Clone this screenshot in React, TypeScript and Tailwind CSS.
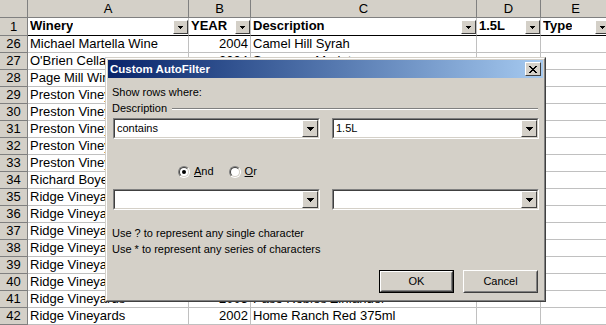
import React from 'react';

type Row = { n: number; a: string; b?: string; c?: string };

// sheet rows under the dialog (B/C of rows 28-40 sit fully behind it)
const rows: Row[] = [
  { n: 26, a: 'Michael Martella Wine', b: '2004', c: 'Camel Hill Syrah' },
  { n: 27, a: "O'Brien Cellars", b: '2004', c: 'Sycamore Merlot' },
  { n: 28, a: 'Page Mill Winery' },
  { n: 29, a: 'Preston Vineyards' },
  { n: 30, a: 'Preston Vineyards' },
  { n: 31, a: 'Preston Vineyards' },
  { n: 32, a: 'Preston Vineyards' },
  { n: 33, a: 'Preston Vineyards' },
  { n: 34, a: 'Richard Boyer Wines' },
  { n: 35, a: 'Ridge Vineyards' },
  { n: 36, a: 'Ridge Vineyards' },
  { n: 37, a: 'Ridge Vineyards' },
  { n: 38, a: 'Ridge Vineyards' },
  { n: 39, a: 'Ridge Vineyards' },
  { n: 40, a: 'Ridge Vineyards' },
  { n: 41, a: 'Ridge Vineyards', b: '2003', c: 'Paso Robles Zinfandel' },
  { n: 42, a: 'Ridge Vineyards', b: '2002', c: 'Home Ranch Red 375ml' },
];

const closeGlyph = ['11000011', '01100110', '00111100', '00011000', '00111100', '01100110', '11000011'];

const SmallArrow = () => (
  <svg width="5" height="3" viewBox="0 0 5 3" shapeRendering="crispEdges">
    <path d="M0 0h5v1h-1v1h-1v1h-1v-1h-1v-1h-1z" fill="#000" />
  </svg>
);

const ComboArrow = () => (
  <svg width="7" height="4" viewBox="0 0 7 4" shapeRendering="crispEdges">
    <path d="M0 0h7v1h-1v1h-1v1h-1v1h-1v-1h-1v-1h-1v-1h-1z" fill="#000" />
  </svg>
);

const FilterButton = () => (
  <div className="w-[15px] h-[14px] shrink-0 bg-[#d4d0c8] border border-t-white border-l-white border-r-[#404040] border-b-[#404040] flex items-center justify-center">
    <SmallArrow />
  </div>
);

const HeadCell = ({ className, label }: { className: string; label: string }) => (
  <div className={`${className} shrink-0 h-full border-r border-b border-r-[#c0c0c0] border-b-black flex items-end justify-between pl-[2px] pb-px`}>
    <span className="font-bold leading-[16px] whitespace-nowrap overflow-hidden">{label}</span>
    <FilterButton />
  </div>
);

const Combo = ({ value }: { value?: string }) => (
  <div className="w-[207px] h-[21px] border border-t-[#808080] border-l-[#808080] border-r-white border-b-white">
    <div className="h-full border border-t-[#404040] border-l-[#404040] border-r-[#d4d0c8] border-b-[#d4d0c8] bg-white flex items-center">
      <span className="flex-1 pl-[2px] text-[11px] leading-[13px]">{value}</span>
      <div className="w-[16px] h-full bg-[#d4d0c8] border border-t-white border-l-white border-r-[#404040] border-b-[#404040] flex items-center justify-center">
        <ComboArrow />
      </div>
    </div>
  </div>
);

const Radio = ({ checked }: { checked?: boolean }) => (
  <div className="w-[12px] h-[12px] rounded-full border border-t-[#808080] border-l-[#808080] border-r-white border-b-white">
    <div className="w-full h-full rounded-full bg-white border border-t-[#404040] border-l-[#404040] border-r-[#d4d0c8] border-b-[#d4d0c8] flex items-center justify-center">
      {checked && <div className="w-[4px] h-[4px] rounded-full bg-black" />}
    </div>
  </div>
);

const Button = ({ label, isDefault }: { label: string; isDefault?: boolean }) => (
  <div className={`w-[75px] h-[23px] ${isDefault ? 'border border-black' : ''}`}>
    <div className="h-full border border-t-white border-l-white border-r-[#404040] border-b-[#404040]">
      <div className="h-full border border-t-[#d4d0c8] border-l-[#d4d0c8] border-r-[#808080] border-b-[#808080] flex items-center justify-center text-[11px] leading-[13px]">
        {label}
      </div>
    </div>
  </div>
);

export default function App() {
  return (
    <div className="relative w-[606px] h-[325px] overflow-hidden bg-white text-black font-['Liberation_Sans',Arial,sans-serif] text-[13px]">
      {/* column headers */}
      <div className="flex h-[18px]">
        <div className="w-[28px] shrink-0 bg-[#d4d0c8] border-r border-b border-[#808080]" />
        {[
          ['w-[161px]', 'A'],
          ['w-[62px]', 'B'],
          ['w-[226px]', 'C'],
          ['w-[64px]', 'D'],
          ['w-[70px]', 'E'],
        ].map(([w, l]) => (
          <div key={l} className={`${w} shrink-0 bg-[#d4d0c8] border-r border-b border-[#808080] flex items-center justify-center leading-[16px]`}>
            {l}
          </div>
        ))}
      </div>

      {/* header row of the list */}
      <div className="flex h-[18px]">
        <div className="w-[28px] shrink-0 bg-[#d4d0c8] border-r border-b border-[#808080] flex items-center justify-center leading-[16px]">1</div>
        <HeadCell className="w-[161px]" label="Winery" />
        <HeadCell className="w-[62px]" label="YEAR" />
        <HeadCell className="w-[226px]" label="Description" />
        <HeadCell className="w-[64px]" label="1.5L" />
        <HeadCell className="w-[70px]" label="Type" />
      </div>

      {rows.map((r) => (
        <div key={r.n} className="flex h-[17px] leading-[16px]">
          <div className="w-[28px] shrink-0 bg-[#d4d0c8] border-r border-b border-[#808080] flex items-center justify-center">{r.n}</div>
          <div className="w-[161px] shrink-0 border-r border-b border-[#c0c0c0] pl-[2px] whitespace-nowrap overflow-hidden">{r.a}</div>
          <div className="w-[62px] shrink-0 border-r border-b border-[#c0c0c0] pr-[2px] text-right">{r.b}</div>
          <div className="w-[226px] shrink-0 border-r border-b border-[#c0c0c0] pl-[2px] whitespace-nowrap overflow-hidden">{r.c}</div>
          <div className="w-[64px] shrink-0 border-r border-b border-[#c0c0c0]" />
          <div className="w-[70px] shrink-0 border-r border-b border-[#c0c0c0]" />
        </div>
      ))}

      {/* Custom AutoFilter dialog */}
      <div className="absolute left-[105px] top-[57px] w-[441px] h-[245px] border border-t-[#d4d0c8] border-l-[#d4d0c8] border-r-[#404040] border-b-[#404040]">
        <div className="h-full border border-t-white border-l-white border-r-[#808080] border-b-[#808080] bg-[#d4d0c8] p-px flex flex-col">
          <div className="h-[18px] shrink-0 flex items-center justify-between bg-gradient-to-r from-[#0a246a] to-[#a6caf0] pl-[2px] pr-[2px]">
            <span className="text-white font-bold text-[11.5px] leading-[14px]">Custom AutoFilter</span>
            <div className="w-[16px] h-[14px] bg-[#d4d0c8] border border-t-white border-l-white border-r-[#404040] border-b-[#404040] flex items-center justify-center">
              <svg width="8" height="7" viewBox="0 0 8 7" shapeRendering="crispEdges">
                {closeGlyph.map((line, y) =>
                  line.split('').map((ch, x) =>
                    ch === '1' ? <rect key={`${x}-${y}`} x={x} y={y} width="1" height="1" fill="#000" /> : null
                  )
                )}
              </svg>
            </div>
          </div>

          <div className="flex flex-col px-[4px] text-[11px] leading-[13px]">
            <div className="mt-[8px] h-[13px]">Show rows where:</div>
            <div className="mt-[3px] h-[13px] flex items-center">
              <span>Description</span>
              <div className="flex-1 ml-[5px] mr-[1px] border-t border-b border-t-[#808080] border-b-white" />
            </div>
            <div className="mt-[3px] flex justify-between pl-px">
              <Combo value="contains" />
              <Combo value="1.5L" />
            </div>
            <div className="mt-[26px] h-[13px] flex items-center pl-[66px]">
              <div className="flex items-center gap-[4px]">
                <Radio checked />
                <span><span className="underline">A</span>nd</span>
              </div>
              <div className="flex items-center gap-[4px] ml-[15px]">
                <Radio />
                <span><span className="underline">O</span>r</span>
              </div>
            </div>
            <div className="mt-[11px] flex justify-between pl-px">
              <Combo />
              <Combo />
            </div>
            <div className="mt-[17px] h-[13px]">Use ? to represent any single character</div>
            <div className="mt-[3px] h-[13px]">Use * to represent any series of characters</div>
            <div className="mt-[14px] flex justify-end gap-[9px] pr-px">
              <Button label="OK" isDefault />
              <Button label="Cancel" />
            </div>
          </div>
        </div>
      </div>
    </div>
  );
}
